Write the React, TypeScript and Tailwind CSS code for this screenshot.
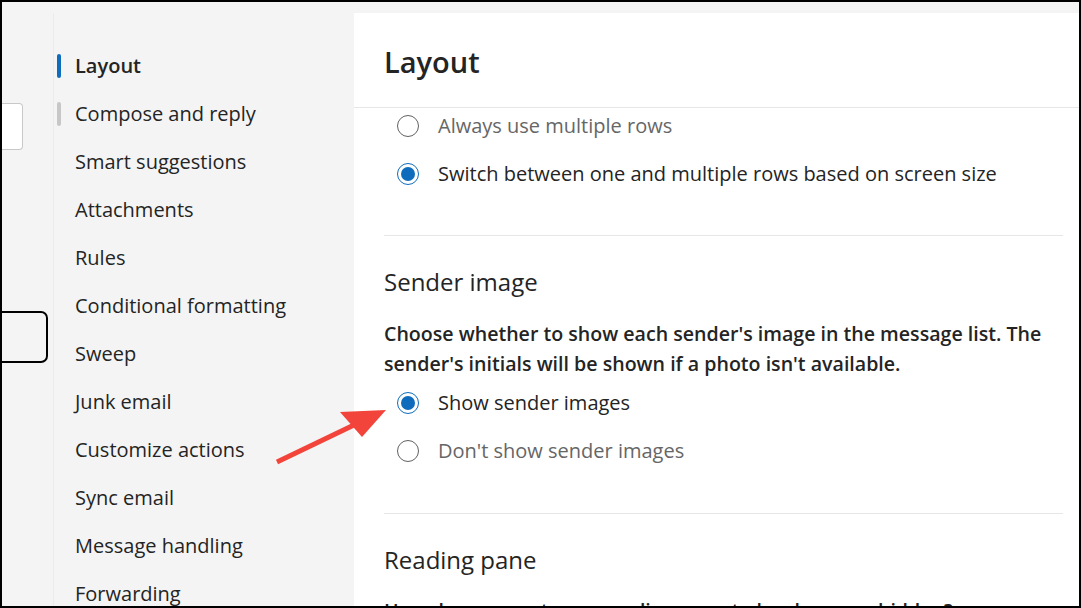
import React from "react";

const navItems = [
  "Layout",
  "Compose and reply",
  "Smart suggestions",
  "Attachments",
  "Rules",
  "Conditional formatting",
  "Sweep",
  "Junk email",
  "Customize actions",
  "Sync email",
  "Message handling",
  "Forwarding",
];

function Radio({ checked, label }: { checked: boolean; label: string }) {
  return (
    <div className="h-12 flex items-center pl-[13px]">
      {checked ? (
        <span className="w-[22px] h-[22px] rounded-full border border-[#0f6cbd] flex items-center justify-center shrink-0">
          <span className="w-[14px] h-[14px] rounded-full bg-[#0f6cbd]" />
        </span>
      ) : (
        <span className="w-[22px] h-[22px] rounded-full border border-[#616161] shrink-0" />
      )}
      <span
        className={
          "ml-[19px] text-[20px] leading-[30px] " +
          (checked ? "text-[#242424]" : "text-[#666666]")
        }
      >
        {label}
      </span>
    </div>
  );
}

export default function App() {
  return (
    <div className="relative w-[1081px] h-[608px] border-2 border-black bg-[#f4f4f4] overflow-hidden flex flex-col font-['Open_Sans',sans-serif]">
      <div className="h-[11px] shrink-0" />
      <div className="flex flex-1 min-h-0">
        {/* left partial column */}
        <div className="w-[51px] shrink-0 flex flex-col">
          <div className="mt-[90px] w-[21px] h-[47px] bg-white border border-l-0 border-[#c8c8c8] rounded-r-[4px]" />
          <div className="mt-[161px] w-[46px] h-[52px] border-2 border-l-0 border-black rounded-r-[7px]" />
        </div>

        {/* settings nav */}
        <nav className="w-[301px] shrink-0 border-l border-[#ebebeb] pt-[29px] flex flex-col">
          {navItems.map((item, i) => (
            <div key={item} className="h-12 flex items-center pl-[3px] shrink-0">
              <span
                className={
                  "w-[4px] h-[24px] rounded-full shrink-0 " +
                  (i === 0 ? "bg-[#0f6cbd]" : i === 1 ? "bg-[#c7c7c7]" : "bg-transparent")
                }
              />
              <span
                className={
                  "ml-[14px] text-[20px] leading-[30px] text-[#242424] " +
                  (i === 0 ? "font-semibold" : "")
                }
              >
                {item}
              </span>
            </div>
          ))}
        </nav>

        {/* content */}
        <main className="flex-1 bg-white flex flex-col min-w-0">
          <div className="h-[95px] shrink-0 border-b border-[#e6e6e6] flex items-center pl-[30px] pt-[3px]">
            <h1 className="text-[29px] font-semibold text-[#242424] leading-[38px]">Layout</h1>
          </div>
          <div className="flex-1 overflow-hidden pl-[30px] pr-[16px]">
            <div className="-mt-[6px]">
              <Radio checked={false} label="Always use multiple rows" />
              <Radio checked={true} label="Switch between one and multiple rows based on screen size" />
            </div>
            <div className="mt-[37px] border-t border-[#e6e6e6]" />
            <h2 className="mt-[31px] text-[24px] font-medium leading-[30px] text-[#242424]">Sender image</h2>
            <p className="mt-[22px] text-[19.6px] font-semibold leading-[30px] text-[#242424]">
              Choose whether to show each sender's image in the message list. The sender's initials will be shown if a photo isn't available.
            </p>
            <div>
              <Radio checked={true} label="Show sender images" />
              <Radio checked={false} label="Don't show sender images" />
            </div>
            <div className="mt-[38px] border-t border-[#e6e6e6]" />
            <h2 className="mt-[31px] text-[24px] font-medium leading-[30px] text-[#242424]">Reading pane</h2>
            <p className="mt-[21px] text-[19.6px] font-semibold leading-[30px] text-[#242424]">
              How do you want your reading pane to be shown or hidden?
            </p>
          </div>
        </main>
      </div>

      {/* annotation arrow */}
      <svg
        className="absolute left-[258px] top-[388px] pointer-events-none"
        width="140"
        height="80"
        viewBox="0 0 140 80"
      >
        <line x1="17" y1="72" x2="94" y2="35" stroke="#f2443a" strokeWidth="5" strokeLinecap="butt" />
        <polygon points="80,22 126,20 102,47" fill="#f2443a" />
      </svg>
    </div>
  );
}
